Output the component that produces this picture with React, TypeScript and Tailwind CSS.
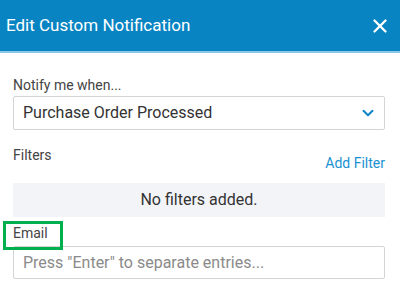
import { ChevronDown, X } from "lucide-react";

const App = () => {
  return (
    <div className="w-[402px] h-[296px] bg-white overflow-hidden font-['Roboto','Liberation_Sans',sans-serif]">
      <div className="w-[400px]">
        <div className="h-[53px] bg-[#0884c3] border-b-2 border-[#8cc6e6] flex items-center justify-between pl-[6px] pr-[9px]">
          <h1 className="text-[17px] text-white leading-none pb-[1px]">Edit Custom Notification</h1>
          <X className="w-[22px] h-[22px] text-white" strokeWidth={2.6} />
        </div>

        <div className="pl-[13px] pr-[15px] pt-[24px]">
          <label className="block text-[14px] text-[#444] leading-[16px] mb-[3px]">Notify me when...</label>
          <div className="h-[34px] border border-[#d4d4d4] rounded-[2px] flex items-center justify-between pl-[9px] pr-[7px]">
            <span className="text-[16px] text-[#333]">Purchase Order Processed</span>
            <ChevronDown className="w-[18px] h-[18px] text-[#0a84c6]" strokeWidth={2.6} />
          </div>

          <div className="flex justify-between mt-[17px]">
            <span className="text-[14px] text-[#444] leading-[16px]">Filters</span>
            <button className="text-[14px] text-[#1a91d0] leading-[16px] mt-[8px]">Add Filter</button>
          </div>
          <div className="h-[34px] bg-[#f3f4f8] mt-[12px] flex items-center justify-center text-[16px] text-[#333]">
            No filters added.
          </div>

          <div className="relative mt-[8px] h-[16px] mb-[5px]">
            <span className="block text-[14px] text-[#444] leading-[16px]">Email</span>
            <div className="absolute left-[-10px] top-[-4px] w-[60px] h-[29px] border-[3px] border-[#00b04f]" />
          </div>
          <input
            className="w-full h-[33px] border border-[#d4d4d4] rounded-[2px] px-[9px] text-[16px] placeholder:text-[#8a8a8a] outline-none"
            placeholder='Press "Enter" to separate entries...'
          />
        </div>
      </div>
    </div>
  );
};

export default App;
